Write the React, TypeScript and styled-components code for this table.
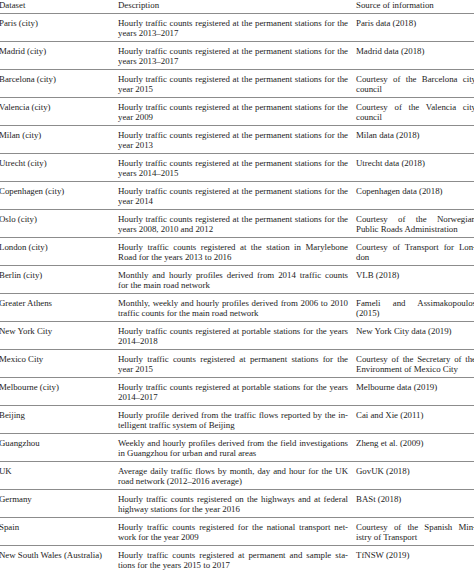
import React from 'react';
import styled, { createGlobalStyle } from 'styled-components';

const GlobalStyle = createGlobalStyle`
  html, body {
    margin: 0;
    padding: 0;
    background: #fff;
  }
  body {
    width: 474px;
    height: 573px;
    overflow: hidden;
  }
`;

const Page = styled.div`
  width: 474px;
  height: 573px;
  overflow: hidden;
  background: #fff;
`;

const Table = styled.div`
  width: 490px;
  margin-left: -1px;
  font-family: 'Liberation Serif', 'Times New Roman', serif;
  font-size: 8.85px;
  letter-spacing: -0.02px;
  color: #1c1c1c;
`;

const Row = styled.div<{ header?: boolean }>`
  display: grid;
  grid-template-columns: 111px 230px 120px;
  column-gap: 8px;
  box-sizing: border-box;
  height: ${(p) => (p.header ? '14px' : '28px')};
  border-bottom: 1px solid #8c8c8c;
  align-items: ${(p) => (p.header ? 'end' : 'start')};
  padding: ${(p) => (p.header ? '0 0 4px 0' : '3.5px 0 0 0')};
`;

const Cell = styled.div`
  line-height: 10.6px;
  white-space: nowrap;
  min-width: 0;
`;

const Line = styled.span<{ justify?: boolean }>`
  display: block;
  text-align: ${(p) => (p.justify ? 'justify' : 'left')};
  text-align-last: ${(p) => (p.justify ? 'justify' : 'left')};
`;

type Entry = {
  name: string;
  desc: [string, string];
  source: string[];
};

const rows: Entry[] = [
  {
    name: 'Paris (city)',
    desc: ['Hourly traffic counts registered at the permanent stations for the', 'years 2013–2017'],
    source: ['Paris data (2018)'],
  },
  {
    name: 'Madrid (city)',
    desc: ['Hourly traffic counts registered at the permanent stations for the', 'years 2013–2017'],
    source: ['Madrid data (2018)'],
  },
  {
    name: 'Barcelona (city)',
    desc: ['Hourly traffic counts registered at the permanent stations for the', 'year 2015'],
    source: ['Courtesy of the Barcelona city', 'council'],
  },
  {
    name: 'Valencia (city)',
    desc: ['Hourly traffic counts registered at the permanent stations for the', 'year 2009'],
    source: ['Courtesy of the Valencia city', 'council'],
  },
  {
    name: 'Milan (city)',
    desc: ['Hourly traffic counts registered at the permanent stations for the', 'year 2013'],
    source: ['Milan data (2018)'],
  },
  {
    name: 'Utrecht (city)',
    desc: ['Hourly traffic counts registered at the permanent stations for the', 'years 2014–2015'],
    source: ['Utrecht data (2018)'],
  },
  {
    name: 'Copenhagen (city)',
    desc: ['Hourly traffic counts registered at the permanent stations for the', 'year 2014'],
    source: ['Copenhagen data (2018)'],
  },
  {
    name: 'Oslo (city)',
    desc: ['Hourly traffic counts registered at the permanent stations for the', 'years 2008, 2010 and 2012'],
    source: ['Courtesy of the Norwegian', 'Public Roads Administration'],
  },
  {
    name: 'London (city)',
    desc: ['Hourly traffic counts registered at the station in Marylebone', 'Road for the years 2013 to 2016'],
    source: ['Courtesy of Transport for Lon-', 'don'],
  },
  {
    name: 'Berlin (city)',
    desc: ['Monthly and hourly profiles derived from 2014 traffic counts', 'for the main road network'],
    source: ['VLB (2018)'],
  },
  {
    name: 'Greater Athens',
    desc: ['Monthly, weekly and hourly profiles derived from 2006 to 2010', 'traffic counts for the main road network'],
    source: ['Fameli and Assimakopoulos', '(2015)'],
  },
  {
    name: 'New York City',
    desc: ['Hourly traffic counts registered at portable stations for the years', '2014–2018'],
    source: ['New York City data (2019)'],
  },
  {
    name: 'Mexico City',
    desc: ['Hourly traffic counts registered at permanent stations for the', 'year 2015'],
    source: ['Courtesy of the Secretary of the', 'Environment of Mexico City'],
  },
  {
    name: 'Melbourne (city)',
    desc: ['Hourly traffic counts registered at portable stations for the years', '2014–2017'],
    source: ['Melbourne data (2019)'],
  },
  {
    name: 'Beijing',
    desc: ['Hourly profile derived from the traffic flows reported by the in-', 'telligent traffic system of Beijing'],
    source: ['Cai and Xie (2011)'],
  },
  {
    name: 'Guangzhou',
    desc: ['Weekly and hourly profiles derived from the field investigations', 'in Guangzhou for urban and rural areas'],
    source: ['Zheng et al. (2009)'],
  },
  {
    name: 'UK',
    desc: ['Average daily traffic flows by month, day and hour for the UK', 'road network (2012–2016 average)'],
    source: ['GovUK (2018)'],
  },
  {
    name: 'Germany',
    desc: ['Hourly traffic counts registered on the highways and at federal', 'highway stations for the year 2016'],
    source: ['BASt (2018)'],
  },
  {
    name: 'Spain',
    desc: ['Hourly traffic counts registered for the national transport net-', 'work for the year 2009'],
    source: ['Courtesy of the Spanish Min-', 'istry of Transport'],
  },
  {
    name: 'New South Wales (Australia)',
    desc: ['Hourly traffic counts registered at permanent and sample sta-', 'tions for the years 2015 to 2017'],
    source: ['TfNSW (2019)'],
  },
];

export default function App() {
  return (
    <Page>
      <GlobalStyle />
      <Table>
        <Row header>
          <Cell>Dataset</Cell>
          <Cell>Description</Cell>
          <Cell>Source of information</Cell>
        </Row>
        {rows.map((r) => (
          <Row key={r.name}>
            <Cell>{r.name}</Cell>
            <Cell>
              <Line justify>{r.desc[0]}</Line>
              <Line>{r.desc[1]}</Line>
            </Cell>
            <Cell>
              {r.source.map((s, i) => (
                <Line key={i} justify={i < r.source.length - 1}>
                  {s}
                </Line>
              ))}
            </Cell>
          </Row>
        ))}
      </Table>
    </Page>
  );
}
